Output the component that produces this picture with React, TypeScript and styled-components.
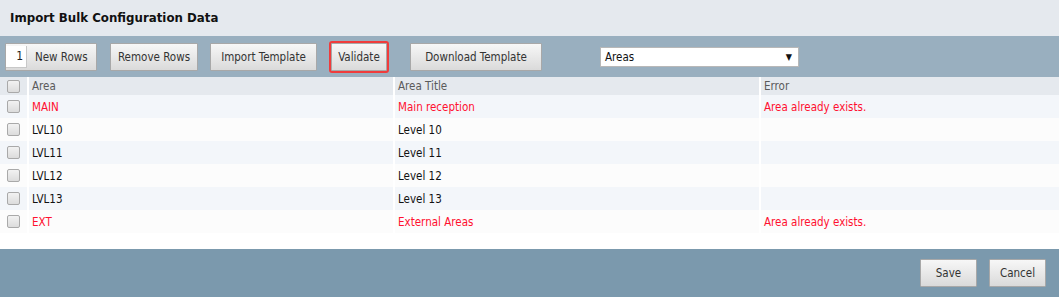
import React from "react";
import styled, { createGlobalStyle } from "styled-components";

const Global = createGlobalStyle`
  html, body { margin: 0; padding: 0; background: #fff; }
  body { font-family: "DejaVu Sans Condensed", "DejaVu Sans", Tahoma, sans-serif; font-size: 11.5px; }
`;

const Page = styled.div`
  width: 1059px;
  height: 297px;
  display: flex;
  flex-direction: column;
  background: #fff;
`;

const TitleBar = styled.div`
  height: 36px;
  background: #e5e9ee;
  display: flex;
  align-items: center;
  padding-left: 10px;
  font-family: "DejaVu Sans", Tahoma, sans-serif;
  font-weight: bold;
  font-size: 11.8px;
  color: #111;
`;

const Toolbar = styled.div`
  height: 41px;
  background: #99afbf;
  display: flex;
  align-items: center;
  padding-left: 5px;
`;

const Button = styled.button<{ $w: number; $gap?: number; $highlight?: boolean }>`
  width: ${(p) => p.$w}px;
  height: 28px;
  margin-right: ${(p) => p.$gap ?? 12}px;
  padding: 0;
  font-family: inherit;
  font-size: 11.5px;
  color: #333;
  background: linear-gradient(#f7f7f7, #dadada);
  border: 1px solid #a8a8a8;
  border-radius: 1px;
  display: flex;
  align-items: center;
  justify-content: center;
  gap: 8px;
  box-sizing: border-box;
  outline: ${(p) => (p.$highlight ? "2px solid #f03c3c" : "none")};
  outline-offset: 0px;
`;

const RowsButton = styled(Button)`
  justify-content: flex-start;
  padding-left: 0;
`;

const CountInput = styled.span`
  width: 21px;
  height: 22px;
  background: #fff;
  border-right: 1px solid #c8c8c8;
  border-bottom: 1px solid #c8c8c8;
  display: flex;
  align-items: center;
  justify-content: flex-end;
  padding-right: 3px;
  box-sizing: border-box;
  color: #222;
  font-size: 12px;
`;

const Select = styled.div`
  width: 199px;
  height: 20px;
  margin-left: 46px;
  background: #fff;
  border: 1px solid #b8b8b8;
  display: flex;
  align-items: center;
  justify-content: space-between;
  padding: 0 6px 0 4px;
  box-sizing: border-box;
  color: #111;
`;

const Arrow = styled.span`
  font-size: 9px;
  color: #111;
`;

const Grid = styled.div`
  display: grid;
  grid-template-columns: 27px 364px 364px 1fr;
  column-gap: 2px;
`;

const HeadCell = styled.div`
  height: 18px;
  background: #e5e9ee;
  color: #5a5a5a;
  display: flex;
  align-items: center;
  padding-left: 3px;
`;

const Cell = styled.div<{ $odd: boolean; $err?: boolean }>`
  height: 23px;
  background: ${(p) => (p.$odd ? "#f3f6fa" : "#fcfcfc")};
  color: ${(p) => (p.$err ? "#ff1030" : "#111")};
  display: flex;
  align-items: center;
  padding-left: 3px;
`;

const BoxCell = styled.div<{ $odd?: boolean; $head?: boolean }>`
  height: ${(p) => (p.$head ? 18 : 23)}px;
  background: ${(p) => (p.$head ? "#e5e9ee" : p.$odd ? "#f3f6fa" : "#fcfcfc")};
  display: flex;
  align-items: center;
  justify-content: center;
`;

const Check = styled.span`
  width: 11px;
  height: 11px;
  border: 1px solid #a9a9a9;
  border-radius: 2px;
  background: linear-gradient(#f2f2f2, #dcdcdc);
`;

const Spacer = styled.div`
  flex: 1;
`;

const Footer = styled.div`
  height: 48px;
  background: #7b99ad;
  display: flex;
  align-items: center;
  justify-content: flex-end;
  padding-right: 1px;
`;

const rows = [
  { area: "MAIN", title: "Main reception", error: "Area already exists." },
  { area: "LVL10", title: "Level 10", error: "" },
  { area: "LVL11", title: "Level 11", error: "" },
  { area: "LVL12", title: "Level 12", error: "" },
  { area: "LVL13", title: "Level 13", error: "" },
  { area: "EXT", title: "External Areas", error: "Area already exists." },
];

export default function App() {
  return (
    <Page>
      <Global />
      <TitleBar>Import Bulk Configuration Data</TitleBar>
      <Toolbar>
        <RowsButton $w={92} $gap={13}>
          <CountInput>1</CountInput>New Rows
        </RowsButton>
        <Button $w={88}>Remove Rows</Button>
        <Button $w={107} $gap={14}>Import Template</Button>
        <Button $w={56} $highlight $gap={23}>Validate</Button>
        <Button $w={132}>Download Template</Button>
        <Select>
          <span>Areas</span>
          <Arrow>▼</Arrow>
        </Select>
      </Toolbar>
      <Grid>
        <BoxCell $head>
          <Check />
        </BoxCell>
        <HeadCell>Area</HeadCell>
        <HeadCell>Area Title</HeadCell>
        <HeadCell>Error</HeadCell>
        {rows.map((r, i) => {
          const odd = i % 2 === 0;
          const err = !!r.error;
          return (
            <React.Fragment key={r.area}>
              <BoxCell $odd={odd}>
                <Check />
              </BoxCell>
              <Cell $odd={odd} $err={err}>{r.area}</Cell>
              <Cell $odd={odd} $err={err}>{r.title}</Cell>
              <Cell $odd={odd} $err={err}>{r.error}</Cell>
            </React.Fragment>
          );
        })}
      </Grid>
      <Spacer />
      <Footer>
        <Button $w={57}>Save</Button>
        <Button $w={57}>Cancel</Button>
      </Footer>
    </Page>
  );
}
